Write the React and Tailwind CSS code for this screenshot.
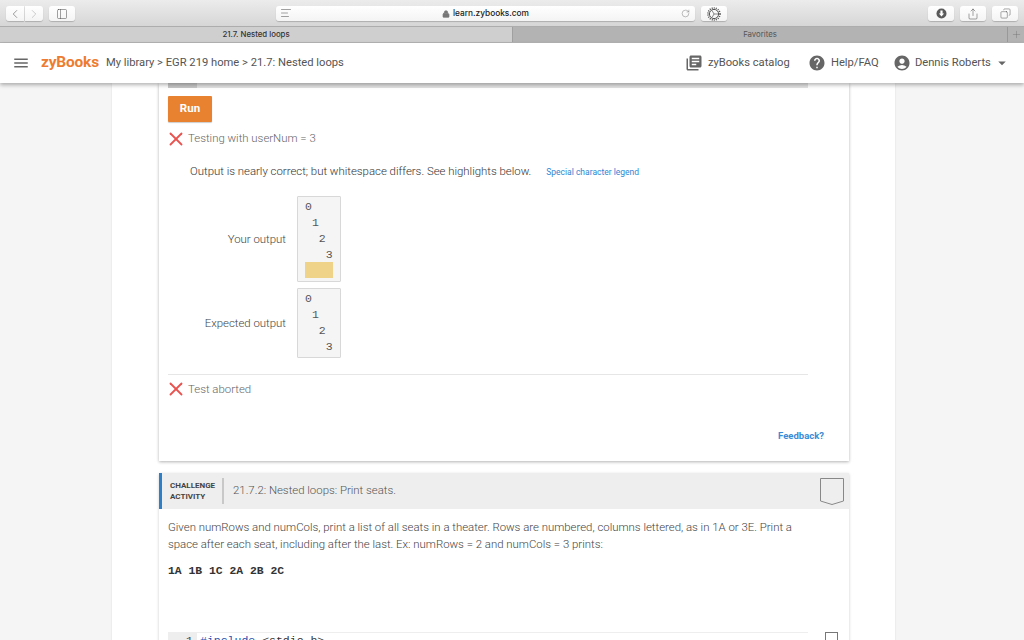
import React from "react";
import { ChevronLeft, ChevronRight, PanelLeft, RotateCw, Share, Copy, Lock, Plus, AlignLeft, X } from "lucide-react";
import { MdMenu, MdLibraryBooks, MdHelp, MdAccountCircle, MdArrowDropDown } from "react-icons/md";

const ToolBtn = ({ className, children }) => (
  <div className={"h-[15px] bg-gradient-to-b from-white to-[#f4f4f4] rounded-[3px] shadow-[0_1px_1px_rgba(0,0,0,0.2)] flex items-center justify-center " + className}>
    {children}
  </div>
);

const Gear = () => (
  <svg width="14" height="14" viewBox="0 0 14 14" fill="none" stroke="#555" strokeWidth="1">
    <circle cx="7" cy="7" r="4.6" />
    <circle cx="7" cy="7" r="6" strokeDasharray="1 1.1" strokeWidth="1.6" />
    <path d="M7 7L11 7M7 7L5 3.4M7 7L5 10.6" strokeWidth="0.7" />
  </svg>
);

const DownloadDot = () => (
  <svg width="11" height="11" viewBox="0 0 11 11">
    <circle cx="5.5" cy="5.5" r="5" fill="#5a5a5a" />
    <path d="M4.4 2.6h2.2v3h1.5L5.5 8.4 2.9 5.6h1.5z" fill="#fff" />
  </svg>
);

const Browser = () => (
  <div className="shrink-0">
    <div className="h-[27px] bg-gradient-to-b from-[#ececec] to-[#d6d6d6] border-b border-[#adadad] flex items-start pt-[6px] pl-[6px]">
      <ToolBtn className="w-[18px] rounded-r-none">
        <ChevronLeft size={14} strokeWidth={1} color="#555" />
      </ToolBtn>
      <ToolBtn className="w-[18px] ml-px rounded-l-none">
        <ChevronRight size={14} strokeWidth={1} color="#aaa" />
      </ToolBtn>
      <ToolBtn className="w-[26px] ml-[6px]">
        <PanelLeft size={12} strokeWidth={1} color="#444" />
      </ToolBtn>
      <ToolBtn className="w-[419px] ml-[201px] relative">
        <AlignLeft size={12} strokeWidth={1} color="#444" className="absolute left-[4px] top-[1px]" />
        <Lock size={8} color="#777" fill="#777" className="mr-[3px]" />
        <span className="font-['Inter','Liberation_Sans',sans-serif] text-[8.3px] font-medium text-[#222]">learn.zybooks.com</span>
        <RotateCw size={9} strokeWidth={1} color="#555" className="absolute right-[5px] top-[3px]" />
      </ToolBtn>
      <ToolBtn className="w-[26px] ml-[6px]">
        <Gear />
      </ToolBtn>
      <ToolBtn className="w-[26px] ml-[201px]">
        <DownloadDot />
      </ToolBtn>
      <ToolBtn className="w-[26px] ml-[6px]">
        <Share size={12} strokeWidth={1} color="#444" />
      </ToolBtn>
      <ToolBtn className="w-[26px] ml-[6px]">
        <Copy size={11} strokeWidth={1} color="#444" className="-scale-x-100" />
      </ToolBtn>
    </div>
    <div className="h-[16px] flex font-['Inter','Liberation_Sans',sans-serif] text-[7.8px] border-b border-[#b5b5b5]">
      <div className="w-[512px] bg-[#cfcfcf] flex items-center justify-center font-medium text-[#333]">21.7. Nested loops</div>
      <div className="flex-1 bg-[#b3b3b3] border-l border-[#a0a0a0] flex items-center justify-center text-[#555]">Favorites</div>
      <div className="w-[17px] bg-[#b3b3b3] border-l border-[#999] flex items-center justify-center">
        <Plus size={11} strokeWidth={0.8} color="#666" />
      </div>
    </div>
  </div>
);

const Nav = () => (
  <div className="h-[40px] shrink-0 bg-white relative z-10 shadow-[0_2px_4px_rgba(0,0,0,0.3)] flex items-center whitespace-nowrap text-[11.2px] text-[#555] font-['Roboto',sans-serif]">
    <MdMenu size={18} color="#666" className="ml-[12px] shrink-0" />
    <span className="ml-[11px] text-[15.5px] font-bold text-[#ee7c30] tracking-[-0.2px]">zyBooks</span>
    <span className="ml-[7px] w-[237px] mt-[1px]">My library &gt; EGR 219 home &gt; 21.7: Nested loops</span>
    <MdLibraryBooks size={18} color="#666" className="ml-[342px] shrink-0" />
    <span className="ml-[5px] w-[82px] mt-[1px]">zyBooks catalog</span>
    <MdHelp size={18} color="#666" className="ml-[18px] shrink-0" />
    <span className="ml-[5px] w-[48px] mt-[1px]">Help/FAQ</span>
    <MdAccountCircle size={18} color="#666" className="ml-[14px] shrink-0" />
    <span className="ml-[4px] w-[77px]">Dennis Roberts</span>
    <MdArrowDropDown size={18} color="#666" className="ml-[1px] shrink-0" />
  </div>
);

const Fail = ({ children }) => (
  <div className="flex items-center h-[16px] text-[#666] font-light">
    <X size={22} strokeWidth={2} color="#e8534f" className="-ml-[3px] shrink-0" />
    <span className="ml-[1px]">{children}</span>
  </div>
);

const OutputBox = ({ lines, highlight }) => (
  <div className="w-[44px] bg-[#f5f5f5] border border-[#d8d8d8] rounded-[1px] px-[7px] pt-[2px] pb-[3px] font-['Liberation_Mono',monospace] text-[11.5px] leading-[15.8px] text-[#555]">
    {lines.map((l) => (
      <div key={l} className="whitespace-pre h-[15.8px]">{l}</div>
    ))}
    {highlight && <div className="h-[16px] bg-[#efd388]" />}
  </div>
);

const TestCard = () => (
  <div className="bg-white shadow-[0_1px_3px_rgba(0,0,0,0.3)] h-[378px] px-[9px] flex flex-col">
    <div className="h-[5px] flex shrink-0">
      <div className="w-[29px] bg-[#c8c8c8]" />
      <div className="w-[611px] bg-[#e2e2e2]" />
    </div>
    <button className="mt-[8px] w-[44px] h-[26px] bg-[#e98230] rounded-[1px] text-white text-[11.5px] font-bold shadow-[0_1px_1px_rgba(0,0,0,0.2)]">Run</button>
    <div className="mt-[9px]">
      <Fail>Testing with userNum = 3</Fail>
    </div>
    <div className="mt-[16px] ml-[22px] flex items-baseline">
      <span className="text-[#333] font-light">Output is nearly correct; but whitespace differs. See highlights below.</span>
      <span className="ml-[15px] text-[8.5px] text-[#2f86d3]">Special character legend</span>
    </div>
    <div className="mt-[16px] flex items-center">
      <span className="w-[118px] text-right text-[#444] font-light">Your output</span>
      <div className="ml-[11px]">
        <OutputBox lines={["0", " 1", "  2", "   3"]} highlight />
      </div>
    </div>
    <div className="mt-[6px] flex items-center">
      <span className="w-[118px] text-right text-[#444] font-light">Expected output</span>
      <div className="ml-[11px]">
        <OutputBox lines={["0", " 1", "  2", "   3"]} />
      </div>
    </div>
    <div className="mt-[16px] w-[640px] border-t border-[#e6e6e6] pt-[6px]">
      <Fail>Test aborted</Fail>
    </div>
    <div className="mt-[32px] w-[656px] text-right text-[9.5px] font-bold text-[#3a8bd8]">Feedback?</div>
  </div>
);

const ChallengeCard = () => (
  <div className="mt-[12px] bg-white shadow-[0_1px_3px_rgba(0,0,0,0.2)] h-[200px]">
    <div className="h-[36px] bg-[#eeeeee] border-l-[3px] border-[#2d7fc7] flex items-center">
      <div className="ml-[8px] w-[52px] text-[8px] leading-[11px] font-bold text-[#444]">CHALLENGE ACTIVITY</div>
      <div className="w-[2px] h-[26px] bg-[#c8c8c8]" />
      <span className="ml-[9px] text-[#555] font-light">21.7.2: Nested loops: Print seats.</span>
      <svg width="24" height="27" viewBox="0 0 24 27" fill="none" stroke="#888" className="ml-auto mr-[5px]">
        <path d="M0.5 0.5H23.5V23L12 26.5L0.5 23Z" />
      </svg>
    </div>
    <div className="px-[9px] pt-[10px] text-[#444] font-light leading-[16.5px]">
      <p>Given numRows and numCols, print a list of all seats in a theater. Rows are numbered, columns lettered, as in 1A or 3E. Print a<br />space after each seat, including after the last. Ex: numRows = 2 and numCols = 3 prints:</p>
      <div className="mt-[11px] font-['Liberation_Mono',monospace] font-bold text-[11.4px] text-[#333] whitespace-pre">1A 1B 1C 2A 2B 2C</div>
      <div className="mt-[52px] flex items-start">
        <div className="w-[640px] border-t border-[#eee] flex font-['Liberation_Mono',monospace] font-normal text-[11.5px] leading-[16px]">
          <div className="w-[29px] bg-[#eeeeee] text-right pr-[4px] text-[#444]">1</div>
          <div className="pl-[3px] whitespace-pre"><span className="text-[#1d4fb0]">#include</span> <span className="text-[#333]">&lt;stdio.h&gt;</span></div>
        </div>
        <div className="ml-[17px] w-[13px] h-[14px] border border-[#777]" />
      </div>
    </div>
  </div>
);

const App = () => {
  return (
    <div className="h-[640px] w-[1024px] overflow-hidden flex flex-col bg-[#f5f5f5]">
      <Browser />
      <Nav />
      <div className="ml-[112px] w-[783px] flex-1 bg-white px-[47px] shadow-[0_0_2px_rgba(0,0,0,0.1)] font-['Roboto',sans-serif] text-[11.4px]">
        <div className="w-[690px]">
          <TestCard />
          <ChallengeCard />
        </div>
      </div>
    </div>
  );
};

export default App;
